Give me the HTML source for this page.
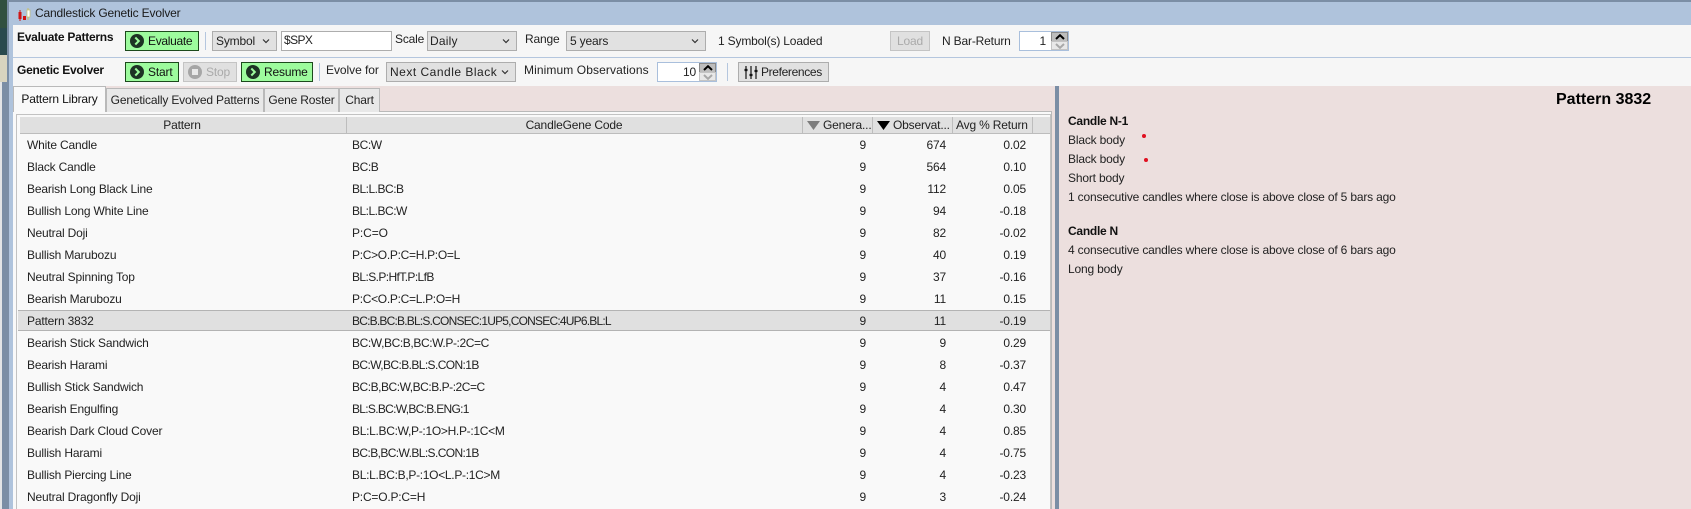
<!DOCTYPE html>
<html><head><meta charset="utf-8"><title>Candlestick Genetic Evolver</title>
<style>
html,body{margin:0;padding:0;width:1691px;height:509px;overflow:hidden;background:#f9f9f9}
body{position:relative;font:12px/16px "Liberation Sans",sans-serif;color:#222;letter-spacing:-.17px}
.a{position:absolute}
.t{position:absolute;white-space:nowrap;height:16px;line-height:16px}
.b{font-weight:bold;color:#111;letter-spacing:-.26px}
.r{text-align:right}
.c{text-align:center}
.btn{position:absolute;box-sizing:border-box;height:20px;background:#9dfb9d;border:1px solid #1c4a1c;line-height:18px;white-space:nowrap;color:#111}
.btn svg{position:absolute;left:4px;top:2px}
.btn span{position:absolute;top:0}
.gray{background:#e0e0e0;border:1px solid #c4c4c4;color:#aaa}
.combo{position:absolute;box-sizing:border-box;height:20px;background:#e1e1e1;border:1px solid #adadad;line-height:18px;padding-left:3px;white-space:nowrap;color:#222}
.combo svg{position:absolute;right:6px;top:6px}
.inp{position:absolute;box-sizing:border-box;height:20px;background:#fff;border:1px solid #a9bfdc;line-height:18px;white-space:nowrap}
.tab{position:absolute;box-sizing:border-box;top:88px;height:24px;background:#e8e8e8;border:1px solid #b9b9b9;border-bottom:0;text-align:center;line-height:22px;white-space:nowrap}
.sep{position:absolute;width:1px;background:#b4c6de}
.hs{position:absolute;top:117px;width:1px;height:16px;background:#bdbdbd}
.row{position:absolute;left:18px;width:1032px;height:22px}
.row span{position:absolute;top:3px;white-space:nowrap;line-height:16px}
.n{left:9px}.k{left:334px}
.g{right:184px}.o{right:104px}.p{right:24px}
.sp{position:absolute;box-sizing:border-box;left:0;width:17px;height:10px}
</style></head><body>
<!-- window chrome -->
<div class="a" style="left:0;top:0;width:7px;height:28px;background:#31503f"></div>
<div class="a" style="left:0;top:28px;width:7px;height:27px;background:#2a4a4e"></div>
<div class="a" style="left:0;top:55px;width:7px;height:27px;background:#d8d4bf"></div>
<div class="a" style="left:0;top:82px;width:2px;height:427px;background:#e3e5e6"></div>
<div class="a" style="left:2px;top:82px;width:5px;height:427px;background:#7b8ea5"></div>
<div class="a" style="left:7px;top:0;width:2px;height:509px;background:#7b8ea5"></div>
<div class="a" style="left:7px;top:0;width:1684px;height:2px;background:#7b8ea5"></div>
<div class="a" style="left:9px;top:2px;width:1682px;height:23px;background:#afc3dc"></div>
<div class="a" style="left:9px;top:2px;width:4px;height:507px;background:#afc3dc"></div>
<!-- title -->
<svg class="a" style="left:17px;top:7px" width="15" height="15" viewBox="0 0 15 15"><path d="M3 3v11" stroke="#c81818" fill="none"/><rect x="1.5" y="5" width="3" height="7" fill="#d01515"/><rect x="6" y="9" width="3" height="4" fill="#d01515"/><path d="M11 1v12" stroke="#c8c26a" fill="none"/><rect x="10" y="3" width="3" height="7" fill="#fff" stroke="#c8c26a" stroke-width=".7"/></svg>
<div class="t" style="left:35px;top:5px;color:#1a1a1a">Candlestick Genetic Evolver</div>
<!-- toolbars -->
<div class="a" style="left:13px;top:25px;width:1678px;height:61px;background:#f6f6f6"></div>
<div class="a" style="left:13px;top:57px;width:1678px;height:1px;background:#b4c6de"></div>
<div class="a" style="left:13px;top:86px;width:1678px;height:423px;background:#ecdfde"></div>

<div class="t b" style="left:17px;top:29px">Evaluate Patterns</div>
<div class="btn" style="left:125px;top:31px;width:74px"><svg width="14" height="14" viewBox="0 0 14 14"><circle cx="7" cy="7" r="7" fill="#1d3324"/><path d="M5.3 3.5 8.8 7l-3.500 3.500" fill="none" stroke="#9dfb9d" stroke-width="2"/></svg><span style="left:22px;letter-spacing:-.3px">Evaluate</span></div>
<div class="sep" style="left:205px;top:32px;height:18px"></div>
<div class="combo" style="left:212px;top:31px;width:65px">Symbol<svg width="8" height="6" viewBox="0 0 8 6"><path d="M1 1.500 4 4.500 7 1.500" fill="none" stroke="#333" stroke-width="1.200"/></svg></div>
<div class="inp" style="left:281px;top:31px;width:111px;border-color:#adadad;padding-left:2px;line-height:16px;letter-spacing:-.6px">$SPX</div>
<div class="t" style="left:395px;top:31px">Scale</div>
<div class="combo" style="left:427px;top:31px;width:90px;padding-left:2px;letter-spacing:.2px">Daily<svg width="8" height="6" viewBox="0 0 8 6"><path d="M1 1.500 4 4.500 7 1.500" fill="none" stroke="#333" stroke-width="1.200"/></svg></div>
<div class="t" style="left:525px;top:31px">Range</div>
<div class="combo" style="left:566px;top:31px;width:140px">5 years<svg width="8" height="6" viewBox="0 0 8 6"><path d="M1 1.500 4 4.500 7 1.500" fill="none" stroke="#333" stroke-width="1.200"/></svg></div>
<div class="t" style="left:718px;top:33px">1 Symbol(s) Loaded</div>
<div class="btn gray c" style="left:890px;top:31px;width:40px">Load</div>
<div class="t" style="left:942px;top:33px">N Bar-Return</div>
<div class="inp r" style="left:1019px;top:31px;width:50px;padding-right:22px">1
 <div class="sp" style="right:0;left:auto;top:0;background:#bdbdbd;border:1px solid #8a8a8a"><svg class="a" style="left:3px;top:1px" width="10" height="6" viewBox="0 0 10 6"><path d="M1 5 5 1.200 9 5" fill="none" stroke="#000" stroke-width="2"/></svg></div>
 <div class="sp" style="right:0;left:auto;top:9px;height:9px;background:#e8e8e8;border:1px solid #c4c4c4"><svg class="a" style="left:3px;top:1px" width="10" height="6" viewBox="0 0 10 6"><path d="M1 1 5 4.800 9 1" fill="none" stroke="#a8a8a8" stroke-width="2"/></svg></div>
</div>

<div class="t b" style="left:17px;top:62px">Genetic Evolver</div>
<div class="btn" style="left:125px;top:62px;width:54px"><svg width="14" height="14" viewBox="0 0 14 14"><circle cx="7" cy="7" r="7" fill="#1d3324"/><path d="M5.3 3.500 8.800 7l-3.500 3.500" fill="none" stroke="#9dfb9d" stroke-width="2"/></svg><span style="left:22px">Start</span></div>
<div class="btn gray" style="left:183px;top:62px;width:54px"><svg width="14" height="14" viewBox="0 0 14 14"><circle cx="7" cy="7" r="7" fill="#a6a6a6"/><rect x="4" y="4" width="6" height="6" fill="#e8e8e8"/></svg><span style="left:22px">Stop</span></div>
<div class="btn" style="left:241px;top:62px;width:72px"><svg width="14" height="14" viewBox="0 0 14 14"><circle cx="7" cy="7" r="7" fill="#1d3324"/><path d="M5.3 3.500 8.800 7l-3.500 3.500" fill="none" stroke="#9dfb9d" stroke-width="2"/></svg><span style="left:22px">Resume</span></div>
<div class="sep" style="left:319px;top:63px;height:18px"></div>
<div class="t" style="left:326px;top:62px;letter-spacing:-.05px">Evolve for</div>
<div class="combo" style="left:386px;top:62px;width:130px;letter-spacing:.5px">Next Candle Black<svg width="8" height="6" viewBox="0 0 8 6"><path d="M1 1.500 4 4.500 7 1.500" fill="none" stroke="#333" stroke-width="1.200"/></svg></div>
<div class="t" style="left:524px;top:62px;letter-spacing:.1px">Minimum Observations</div>
<div class="inp r" style="left:657px;top:62px;width:60px;padding-right:20px">10
 <div class="sp" style="right:0;left:auto;top:0;background:#bdbdbd;border:1px solid #8a8a8a"><svg class="a" style="left:3px;top:1px" width="10" height="6" viewBox="0 0 10 6"><path d="M1 5 5 1.200 9 5" fill="none" stroke="#000" stroke-width="2"/></svg></div>
 <div class="sp" style="right:0;left:auto;top:9px;height:9px;background:#e8e8e8;border:1px solid #c4c4c4"><svg class="a" style="left:3px;top:1px" width="10" height="6" viewBox="0 0 10 6"><path d="M1 1 5 4.800 9 1" fill="none" stroke="#a8a8a8" stroke-width="2"/></svg></div>
</div>
<div class="sep" style="left:727px;top:63px;height:18px"></div>
<div class="combo" style="left:738px;top:62px;width:91px;padding-left:22px;letter-spacing:-.35px">Preferences<svg style="left:5px;right:auto;top:2px" width="14" height="15" viewBox="0 0 14 15"><path d="M2 1v13M7 1v13M12 1v13" stroke="#222" stroke-width="1.300" fill="none"/><path d="M.5 5h3M5.500 10h3M10.500 6h3" stroke="#111" stroke-width="2.200" fill="none"/></svg></div>

<!-- tab panel -->
<div class="a" style="left:13px;top:111px;width:1039px;height:398px;box-sizing:border-box;background:#f9f9f9;border-top:1px solid #b9b9b9;border-right:1px solid #b9b9b9"></div>
<div class="tab" style="left:106px;width:158px">Genetically Evolved Patterns</div>
<div class="tab" style="left:264px;width:75px">Gene Roster</div>
<div class="tab" style="left:339px;width:41px">Chart</div>
<div class="tab" style="left:13px;top:86px;height:26px;width:93px;background:#f9f9f9;color:#111;line-height:24px">Pattern Library</div>
<div class="a" style="left:16px;top:114px;width:1035px;height:395px;box-sizing:border-box;border:1px solid #c2c2c2;border-bottom:0"></div>

<!-- table header -->
<div class="a" style="left:20px;top:117px;width:1030px;height:16px;background:#e0e0e0;border-bottom:1px solid #bdbdbd"></div>
<div class="hs" style="left:346px"></div><div class="hs" style="left:802px"></div><div class="hs" style="left:872px"></div><div class="hs" style="left:952px"></div><div class="hs" style="left:1032px"></div>
<div class="t c" style="left:18px;top:117px;width:328px">Pattern</div>
<div class="t c" style="left:346px;top:117px;width:456px">CandleGene Code</div>
<svg class="a" style="left:807px;top:121px" width="13" height="9" viewBox="0 0 13 9"><path d="M0 0h13L6.500 9z" fill="#7d7d7d"/></svg>
<div class="t" style="left:823px;top:117px">Genera...</div>
<svg class="a" style="left:877px;top:121px" width="13" height="9" viewBox="0 0 13 9"><path d="M0 0h13L6.500 9z" fill="#000"/></svg>
<div class="t" style="left:893px;top:117px">Observat...</div>
<div class="t" style="left:956px;top:117px">Avg % Return</div>

<!-- rows -->
<div class="row" style="top:134px"><span class="n">White Candle</span><span class="k" style="letter-spacing:-.4px">BC:W</span><span class="g">9</span><span class="o">674</span><span class="p">0.02</span></div>
<div class="row" style="top:156px"><span class="n">Black Candle</span><span class="k" style="letter-spacing:-.4px">BC:B</span><span class="g">9</span><span class="o">564</span><span class="p">0.10</span></div>
<div class="row" style="top:178px"><span class="n">Bearish Long Black Line</span><span class="k" style="letter-spacing:-.5px">BL:L.BC:B</span><span class="g">9</span><span class="o">112</span><span class="p">0.05</span></div>
<div class="row" style="top:200px"><span class="n">Bullish Long White Line</span><span class="k" style="letter-spacing:-.5px">BL:L.BC:W</span><span class="g">9</span><span class="o">94</span><span class="p">-0.18</span></div>
<div class="row" style="top:222px"><span class="n">Neutral Doji</span><span class="k" style="letter-spacing:-.1px">P:C=O</span><span class="g">9</span><span class="o">82</span><span class="p">-0.02</span></div>
<div class="row" style="top:244px"><span class="n">Bullish Marubozu</span><span class="k" style="letter-spacing:-.3px">P:C&gt;O.P:C=H.P:O=L</span><span class="g">9</span><span class="o">40</span><span class="p">0.19</span></div>
<div class="row" style="top:266px"><span class="n">Neutral Spinning Top</span><span class="k" style="letter-spacing:-.6px">BL:S.P:HfT.P:LfB</span><span class="g">9</span><span class="o">37</span><span class="p">-0.16</span></div>
<div class="row" style="top:288px"><span class="n">Bearish Marubozu</span><span class="k" style="letter-spacing:-.3px">P:C&lt;O.P:C=L.P:O=H</span><span class="g">9</span><span class="o">11</span><span class="p">0.15</span></div>
<div class="row" style="top:310px;box-sizing:border-box;background:#e0e0e0;border:1px solid #b3b3b3;border-width:1px 0;height:21px"><span class="n" style="top:2px">Pattern 3832</span><span class="k" style="top:2px;letter-spacing:-.79px">BC:B.BC:B.BL:S.CONSEC:1UP5,CONSEC:4UP6.BL:L</span><span class="g" style="top:2px">9</span><span class="o" style="top:2px">11</span><span class="p" style="top:2px">-0.19</span></div>
<div class="row" style="top:332px"><span class="n">Bearish Stick Sandwich</span><span class="k" style="letter-spacing:-.4px">BC:W,BC:B,BC:W.P-:2C=C</span><span class="g">9</span><span class="o">9</span><span class="p">0.29</span></div>
<div class="row" style="top:354px"><span class="n">Bearish Harami</span><span class="k" style="letter-spacing:-.6px">BC:W,BC:B.BL:S.CON:1B</span><span class="g">9</span><span class="o">8</span><span class="p">-0.37</span></div>
<div class="row" style="top:376px"><span class="n">Bullish Stick Sandwich</span><span class="k" style="letter-spacing:-.47px">BC:B,BC:W,BC:B.P-:2C=C</span><span class="g">9</span><span class="o">4</span><span class="p">0.47</span></div>
<div class="row" style="top:398px"><span class="n">Bearish Engulfing</span><span class="k" style="letter-spacing:-.7px">BL:S.BC:W,BC:B.ENG:1</span><span class="g">9</span><span class="o">4</span><span class="p">0.30</span></div>
<div class="row" style="top:420px"><span class="n">Bearish Dark Cloud Cover</span><span class="k" style="letter-spacing:-.3px">BL:L.BC:W,P-:1O&gt;H.P-:1C&lt;M</span><span class="g">9</span><span class="o">4</span><span class="p">0.85</span></div>
<div class="row" style="top:442px"><span class="n">Bullish Harami</span><span class="k" style="letter-spacing:-.6px">BC:B,BC:W.BL:S.CON:1B</span><span class="g">9</span><span class="o">4</span><span class="p">-0.75</span></div>
<div class="row" style="top:464px"><span class="n">Bullish Piercing Line</span><span class="k" style="letter-spacing:-.3px">BL:L.BC:B,P-:1O&lt;L.P-:1C&gt;M</span><span class="g">9</span><span class="o">4</span><span class="p">-0.23</span></div>
<div class="row" style="top:486px"><span class="n">Neutral Dragonfly Doji</span><span class="k" style="letter-spacing:-.2px">P:C=O.P:C=H</span><span class="g">9</span><span class="o">3</span><span class="p">-0.24</span></div>

<!-- splitter -->
<div class="a" style="left:1052px;top:86px;width:3px;height:423px;background:#ecdfde"></div>
<div class="a" style="left:1055px;top:86px;width:4px;height:423px;background:#7b8ea5"></div>

<!-- right panel -->
<div class="t b" style="left:1556px;top:92px;font-size:16px;color:#000;letter-spacing:0">Pattern 3832</div>
<div class="t b" style="left:1068px;top:113px">Candle N-1</div>
<div class="t" style="left:1068px;top:132px">Black body</div>
<div class="t" style="left:1068px;top:151px">Black body</div>
<div class="t" style="left:1068px;top:170px">Short body</div>
<div class="t" style="left:1068px;top:189px">1 consecutive candles where close is above close of 5 bars ago</div>
<div class="t b" style="left:1068px;top:223px">Candle N</div>
<div class="t" style="left:1068px;top:242px">4 consecutive candles where close is above close of 6 bars ago</div>
<div class="t" style="left:1068px;top:261px">Long body</div>
<div class="a" style="left:1142px;top:134px;width:4px;height:4px;border-radius:50%;background:#e01020"></div>
<div class="a" style="left:1144px;top:158px;width:4px;height:4px;border-radius:50%;background:#e01020"></div>
</body></html>
